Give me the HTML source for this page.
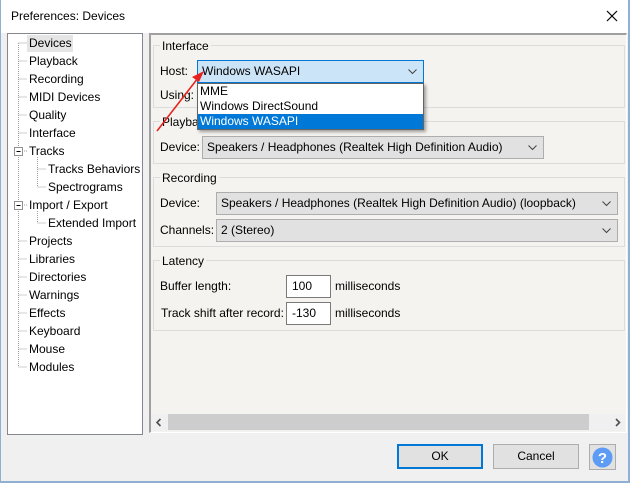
<!DOCTYPE html>
<html><head><style>
*{margin:0;padding:0;box-sizing:border-box}
body{width:630px;height:483px;overflow:hidden;background:#f0f0f0;font-family:"Liberation Sans",sans-serif;font-size:12px;color:#000;position:relative}
.a{position:absolute;white-space:nowrap}
.t{position:absolute;white-space:nowrap;line-height:16px}
.grp{position:absolute;border:1px solid #dcdcdc}
.lab{position:absolute;background:#f4f3ef;padding:0 2px;line-height:14px}
.cb{position:absolute;background:#e1e1e1;border:1px solid #adadad;line-height:20px;padding-left:4px}
.cb .ar{position:absolute;right:6px;top:0}
.in{position:absolute;background:#fff;border:1px solid #7a7a7a;line-height:20px;padding-left:5px}
.btn{position:absolute;background:#e1e1e1;border:1px solid #adadad;text-align:center;line-height:22px}
</style></head><body>
<div class="a" style="left:0;top:0;width:630px;height:33px;background:#fff"></div>
<div class="a" style="left:0;top:0;width:1px;height:483px;background:#8fb0d3"></div>
<div class="a" style="left:628px;top:0;width:2px;height:483px;background:#8fb0d3"></div>
<div class="a" style="left:11px;top:9px;font-size:12px">Preferences: Devices</div>
<svg class="a" style="left:606px;top:10px" width="12" height="12"><path d="M1 1L11 11M11 1L1 11" stroke="#000" stroke-width="1.2"/></svg>

<div class="a" style="left:7px;top:33px;width:136px;height:402px;background:#fff;border:1px solid #828790"></div>
<svg class="a" style="left:8px;top:34px" width="134" height="400">
<g stroke="#a0a0a0" stroke-dasharray="1,1" fill="none">
<path d="M10.5 9V333"/>
<path d="M10.5 9H19M10.5 27H19M10.5 45H19M10.5 63H19M10.5 81H19M10.5 99H19M14 117H19M14 171H19M10.5 207H19M10.5 225H19M10.5 243H19M10.5 261H19M10.5 279H19M10.5 297H19M10.5 315H19M10.5 333H19"/>
<path d="M29.5 123V153M29.5 135H38M29.5 153H38M29.5 177V189M29.5 189H38"/>
</g>
<rect x="6.5" y="113.5" width="8" height="8" fill="#fff" stroke="#919191"/><path d="M8.5 117.5H12.5" stroke="#000"/>
<rect x="6.5" y="167.5" width="8" height="8" fill="#fff" stroke="#919191"/><path d="M8.5 171.5H12.5" stroke="#000"/>
</svg>
<div class="a" style="left:27px;top:35px;width:46px;height:17px;background:#e5e5e5"></div>
<div class="t" style="left:29px;top:35px">Devices</div>
<div class="t" style="left:29px;top:53px">Playback</div>
<div class="t" style="left:29px;top:71px">Recording</div>
<div class="t" style="left:29px;top:89px">MIDI Devices</div>
<div class="t" style="left:29px;top:107px">Quality</div>
<div class="t" style="left:29px;top:125px">Interface</div>
<div class="t" style="left:29px;top:143px">Tracks</div>
<div class="t" style="left:48px;top:161px">Tracks Behaviors</div>
<div class="t" style="left:48px;top:179px">Spectrograms</div>
<div class="t" style="left:29px;top:197px">Import / Export</div>
<div class="t" style="left:48px;top:215px">Extended Import</div>
<div class="t" style="left:29px;top:233px">Projects</div>
<div class="t" style="left:29px;top:251px">Libraries</div>
<div class="t" style="left:29px;top:269px">Directories</div>
<div class="t" style="left:29px;top:287px">Warnings</div>
<div class="t" style="left:29px;top:305px">Effects</div>
<div class="t" style="left:29px;top:323px">Keyboard</div>
<div class="t" style="left:29px;top:341px">Mouse</div>
<div class="t" style="left:29px;top:359px">Modules</div>

<div class="a" style="left:149px;top:33px;width:478px;height:400px;background:#f4f3ef;border-left:2px solid #a0a0a0;border-top:2px solid #a0a0a0;border-right:1px solid #fff;border-bottom:1px solid #fff"></div>
<div class="a" style="left:151px;top:414px;width:474px;height:17px;background:#f0f0f0"></div>
<div class="a" style="left:168px;top:414px;width:421px;height:16px;background:#cdcdcd"></div>
<svg class="a" style="left:155px;top:418px" width="8" height="9"><path d="M5.5 1L2 4.5L5.5 8" stroke="#505050" stroke-width="1.6" fill="none"/></svg>
<svg class="a" style="left:614px;top:418px" width="8" height="9"><path d="M2 1L5.5 4.5L2 8" stroke="#505050" stroke-width="1.6" fill="none"/></svg>

<div class="grp" style="left:153px;top:45px;width:472px;height:63px"></div>
<div class="lab" style="left:160px;top:39px">Interface</div>
<div class="t" style="left:160px;top:63px">Host:</div>
<div class="t" style="left:160px;top:87px">Using:</div>

<div class="grp" style="left:153px;top:121px;width:472px;height:43px"></div>
<div class="lab" style="left:160px;top:115px">Playback</div>
<div class="t" style="left:160px;top:139px">Device:</div>
<div class="cb" style="left:202px;top:136px;width:342px;height:23px">Speakers / Headphones (Realtek High Definition Audio)<svg class="ar" style="top:8px" width="9" height="6"><path d="M.5 .5L4.5 4.5L8.5 .5" stroke="#444" fill="none"/></svg></div>

<div class="grp" style="left:153px;top:177px;width:472px;height:70px"></div>
<div class="lab" style="left:160px;top:171px">Recording</div>
<div class="t" style="left:160px;top:195px">Device:</div>
<div class="cb" style="left:216px;top:192px;width:402px;height:23px">Speakers / Headphones (Realtek High Definition Audio) (loopback)<svg class="ar" style="top:8px" width="9" height="6"><path d="M.5 .5L4.5 4.5L8.5 .5" stroke="#444" fill="none"/></svg></div>
<div class="t" style="left:160px;top:222px">Channels:</div>
<div class="cb" style="left:216px;top:219px;width:402px;height:23px">2 (Stereo)<svg class="ar" style="top:8px" width="9" height="6"><path d="M.5 .5L4.5 4.5L8.5 .5" stroke="#444" fill="none"/></svg></div>

<div class="grp" style="left:153px;top:260px;width:472px;height:71px"></div>
<div class="lab" style="left:160px;top:254px">Latency</div>
<div class="t" style="left:160px;top:278px">Buffer length:</div>
<div class="in" style="left:286px;top:275px;width:45px;height:23px">100</div>
<div class="t" style="left:335px;top:278px">milliseconds</div>
<div class="t" style="left:161px;top:305px">Track shift after record:</div>
<div class="in" style="left:286px;top:302px;width:45px;height:23px">-130</div>
<div class="t" style="left:335px;top:305px">milliseconds</div>

<div class="a" style="left:197px;top:60px;width:227px;height:23px;background:#cce4f7;border:1px solid #0078d7;line-height:21px;padding-left:4px">Windows WASAPI<svg class="a" style="right:6px;top:8px" width="9" height="6"><path d="M.5 .5L4.5 4.5L8.5 .5" stroke="#444" fill="none"/></svg></div>
<div class="a" style="left:197px;top:83px;width:227px;height:47px;background:#fff;border:1px solid #646464;box-shadow:2px 2px 3px rgba(0,0,0,.35)"></div>
<div class="t" style="left:200px;top:84px;line-height:15px">MME</div>
<div class="t" style="left:200px;top:99px;line-height:15px">Windows DirectSound</div>
<div class="a" style="left:198px;top:114px;width:225px;height:15px;background:#0078d7"></div>
<div class="t" style="left:200px;top:114px;line-height:15px;color:#fff">Windows WASAPI</div>

<svg class="a" style="left:150px;top:60px" width="70" height="80"><path d="M7 71L48 18" stroke="#e8231f" stroke-width="1.6"/><path d="M54 11L42 17L49 22Z" fill="#e8231f"/></svg>

<div class="btn" style="left:397px;top:444px;width:86px;height:25px;border:2px solid #0078d7;line-height:21px">OK</div>
<div class="btn" style="left:493px;top:444px;width:86px;height:25px">Cancel</div>
<div class="btn" style="left:589px;top:444px;width:27px;height:26px"></div>
<svg class="a" style="left:591px;top:446px" width="23" height="23"><circle cx="11.5" cy="11.5" r="10" fill="#5c9cf5"/><text x="11.5" y="17" text-anchor="middle" font-family="Liberation Sans" font-weight="bold" font-size="15" fill="#fff">?</text></svg>
<div class="a" style="left:0;top:481px;width:630px;height:2px;background:#8fb0d3"></div>
</body></html>
